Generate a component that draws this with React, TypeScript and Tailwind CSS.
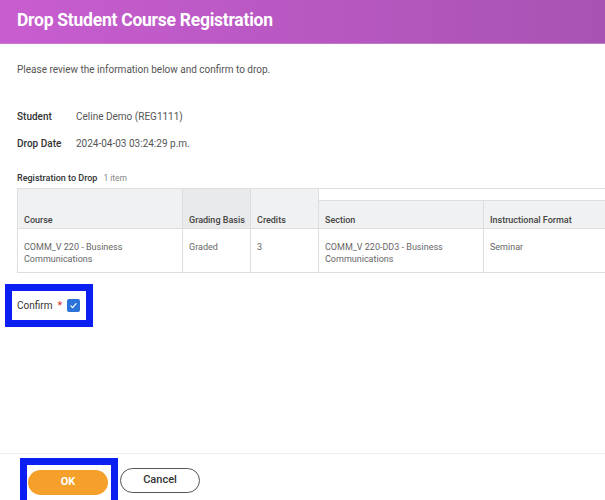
import React from 'react';

const cols = [
    { key: 'course', label: 'Course', w: 165 },
    { key: 'grading', label: 'Grading Basis', w: 68 },
    { key: 'credits', label: 'Credits', w: 68 },
    { key: 'section', label: 'Section', w: 165 },
    { key: 'format', label: 'Instructional Format', w: 165 },
];

const ROW = {
    course: 'COMM_V 220 - Business Communications',
    grading: 'Graded',
    credits: '3',
    section: 'COMM_V 220-DD3 - Business Communications',
    format: 'Seminar',
};

export default function App() {
    return (
        <div className="h-[500px] w-[605px] overflow-hidden bg-white flex flex-col font-['Roboto',sans-serif]">
            {/* header */}
            <div className="h-[44px] flex-shrink-0 flex items-center px-[17px] bg-gradient-to-r from-[#c85dd0] to-[#a853b3] border-b border-[#c37ccb]">
                <h1 className="text-white text-[17.5px] font-bold tracking-[-0.25px] leading-none pb-[2px]">Drop Student Course Registration</h1>
            </div>

            <div className="px-[17px]">
                <p className="mt-[19px] text-[10px] leading-[14px] text-[#555]">Please review the information below and confirm to drop.</p>

                <div className="mt-[33px] flex flex-col gap-[13px] text-[10px] leading-[14px]">
                    <div className="flex">
                        <span className="w-[59px] text-[#333] font-medium">Student</span>
                        <span className="text-[#555]">Celine Demo (REG1111)</span>
                    </div>
                    <div className="flex">
                        <span className="w-[59px] text-[#333] font-medium">Drop Date</span>
                        <span className="text-[#555]">2024-04-03 03:24:29 p.m.</span>
                    </div>
                </div>

                <div className="mt-[21px] flex items-baseline gap-[6px] leading-[12px]">
                    <span className="text-[9px] font-medium text-[#333]">Registration to Drop</span>
                    <span className="text-[8.5px] text-[#888]">1 item</span>
                </div>
            </div>

            {/* table */}
            <div className="mt-[4px] pl-[17px] overflow-hidden">
                <table className="border-collapse table-fixed text-[9px]" style={{ width: 631 }}>
                    <colgroup>
                        {cols.map(c => <col key={c.key} style={{ width: c.w }} />)}
                    </colgroup>
                    <thead>
                        <tr className="h-[12px]">
                            {cols.slice(0, 3).map(c => (
                                <th key={c.key} rowSpan={2}
                                    className={`border border-[#dedede] align-bottom text-left font-medium text-[#444] whitespace-nowrap px-[6px] pb-[2px] leading-[12px] ${c.key === 'grading' ? 'bg-[#e9eaeb]' : 'bg-[#f0f1f2]'}`}>
                                    {c.label}
                                </th>
                            ))}
                            <th colSpan={2} className="border border-[#dedede] bg-white" />
                        </tr>
                        <tr className="h-[28px]">
                            {cols.slice(3).map(c => (
                                <th key={c.key} className="border border-[#dedede] bg-[#f0f1f2] align-bottom text-left font-medium text-[#444] whitespace-nowrap px-[6px] pb-[2px] leading-[12px]">
                                    {c.label}
                                </th>
                            ))}
                        </tr>
                    </thead>
                    <tbody>
                        <tr className="h-[44px]">
                            {cols.map(c => (
                                <td key={c.key} className="border border-[#dedede] align-top text-[#666] px-[6px] pt-[12px] leading-[12px]">
                                    {ROW[c.key as keyof typeof ROW]}
                                </td>
                            ))}
                        </tr>
                    </tbody>
                </table>
            </div>

            {/* confirm */}
            <div className="mt-[11px] ml-[5px] self-start h-[43px] border-[7px] border-[#0c1ff2] flex items-center gap-[5px] pl-[5px] pr-[6px]">
                <span className="text-[10px] text-[#333]">Confirm</span>
                <span className="text-[11px] text-[#d9342b] leading-none">*</span>
                <span className="w-[13px] h-[13px] rounded-[2px] bg-[#2b73d8] flex items-center justify-center">
                    <svg width="9" height="9" viewBox="0 0 12 12" fill="none">
                        <path d="M2.5 6.5l2.3 2.3L9.5 3.5" stroke="white" strokeWidth="1.6" strokeLinecap="round" strokeLinejoin="round" />
                    </svg>
                </span>
            </div>

            <div className="flex-1" />

            {/* footer */}
            <div className="h-[47px] flex-shrink-0 border-t border-[#eeeeee] flex items-start pt-[4px]">
                <div className="ml-[20px] border-[7px] border-[#0c1ff2] pl-[1px] pr-[3px] pt-[3px] pb-[10px]">
                    <button className="w-[80px] h-[25px] rounded-full bg-[#f6a02c] text-white text-[11px] font-bold">OK</button>
                </div>
                <button className="ml-[2px] mt-[10px] w-[80px] h-[25px] rounded-full border border-[#555] bg-white text-[#333] text-[11px] font-medium">Cancel</button>
            </div>
        </div>
    );
}
